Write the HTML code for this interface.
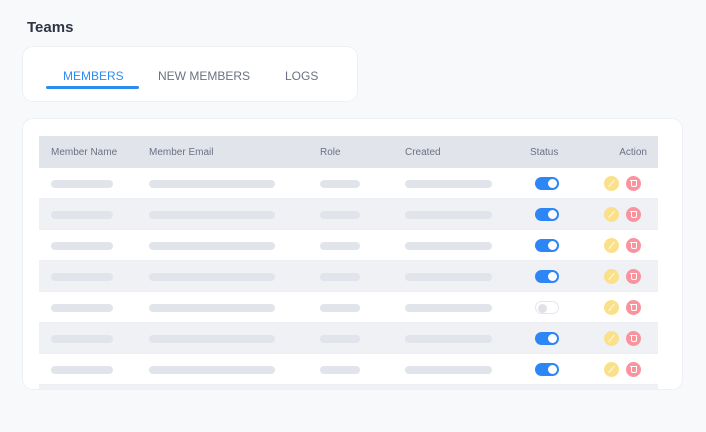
<!DOCTYPE html>
<html><head><style>
body{margin:0;width:706px;height:432px;background:#f8f9fb;font-family:"Liberation Sans",sans-serif;position:relative;overflow:hidden}
.t{position:absolute;left:27px;top:19px;font-size:15px;font-weight:bold;color:#2f3545}
.tabs{position:absolute;left:22px;top:46px;width:336px;height:56px;background:#fff;border:1px solid #eef0f4;border-radius:11px;box-sizing:border-box}
.tab{position:absolute;top:22px;font-size:12px;color:#6b7183}
.ul{position:absolute;left:23px;top:39px;width:93px;height:3px;background:#2d8cf0;border-radius:2px}
.card{position:absolute;left:22px;top:118px;width:661px;height:272px;background:#fff;border:1px solid #eef0f4;border-radius:11px;box-sizing:border-box;overflow:hidden}
.tbl{position:absolute;left:16px;top:17px;width:619px}
.hd{height:32px;background:#e2e4ec;position:relative;font-size:10px;color:#6b7183}
.hd span{position:absolute;top:11px}
.r{height:31px;position:relative;border-bottom:1px solid #eceef3;box-sizing:border-box}
.b{position:absolute;top:12px;height:8px;background:#e2e4ec;border-radius:4px}
.tg{position:absolute;left:496px;top:9px;width:24px;height:13px;border-radius:7px;background:#2d86f6}
.tg::after{content:"";position:absolute;right:2px;top:2px;width:9px;height:9px;border-radius:50%;background:#fff}
.tg.off{background:#fff;border:1px solid #e4e6ec;box-sizing:border-box}
.tg.off::after{left:2px;right:auto;top:1.5px;background:#e0e2e8}
.y,.p{position:absolute;top:8px;width:15px;height:15px;border-radius:50%}
.y{left:565px;background:#fbe08a}.p{left:587px;background:#f9949f}
.y::after{content:"";position:absolute;left:7px;top:3px;width:1.2px;height:9px;background:#fff;transform:rotate(40deg);opacity:.8}
.p::before{content:"";position:absolute;left:4px;top:4px;width:7px;height:1px;background:#fff}
.p::after{content:"";position:absolute;left:4.5px;top:5px;width:4px;height:5px;border:1px solid #fff;border-top:0;border-radius:0 0 2px 2px}
</style></head><body>
<div class="t">Teams</div>
<div class="tabs">
<div class="tab" style="left:40px;color:#2d8cf0">MEMBERS</div>
<div class="tab" style="left:135px">NEW MEMBERS</div>
<div class="tab" style="left:262px">LOGS</div>
<div class="ul"></div>
</div>
<div class="card"><div class="tbl">
<div class="hd"><span style="left:12px">Member Name</span><span style="left:110px">Member Email</span><span style="left:281px">Role</span><span style="left:366px">Created</span><span style="left:491px">Status</span><span style="right:11px">Action</span></div>
<div>
<div class="r" style="background:#fff"><div class="b" style="left:12px;width:62px"></div><div class="b" style="left:110px;width:126px"></div><div class="b" style="left:281px;width:40px"></div><div class="b" style="left:366px;width:87px"></div><div class="tg"></div><div class="y"></div><div class="p"></div></div>
<div class="r" style="background:#f0f1f5"><div class="b" style="left:12px;width:62px"></div><div class="b" style="left:110px;width:126px"></div><div class="b" style="left:281px;width:40px"></div><div class="b" style="left:366px;width:87px"></div><div class="tg"></div><div class="y"></div><div class="p"></div></div>
<div class="r" style="background:#fff"><div class="b" style="left:12px;width:62px"></div><div class="b" style="left:110px;width:126px"></div><div class="b" style="left:281px;width:40px"></div><div class="b" style="left:366px;width:87px"></div><div class="tg"></div><div class="y"></div><div class="p"></div></div>
<div class="r" style="background:#f0f1f5"><div class="b" style="left:12px;width:62px"></div><div class="b" style="left:110px;width:126px"></div><div class="b" style="left:281px;width:40px"></div><div class="b" style="left:366px;width:87px"></div><div class="tg"></div><div class="y"></div><div class="p"></div></div>
<div class="r" style="background:#fff"><div class="b" style="left:12px;width:62px"></div><div class="b" style="left:110px;width:126px"></div><div class="b" style="left:281px;width:40px"></div><div class="b" style="left:366px;width:87px"></div><div class="tg off"></div><div class="y"></div><div class="p"></div></div>
<div class="r" style="background:#f0f1f5"><div class="b" style="left:12px;width:62px"></div><div class="b" style="left:110px;width:126px"></div><div class="b" style="left:281px;width:40px"></div><div class="b" style="left:366px;width:87px"></div><div class="tg"></div><div class="y"></div><div class="p"></div></div>
<div class="r" style="background:#fff"><div class="b" style="left:12px;width:62px"></div><div class="b" style="left:110px;width:126px"></div><div class="b" style="left:281px;width:40px"></div><div class="b" style="left:366px;width:87px"></div><div class="tg"></div><div class="y"></div><div class="p"></div></div>
<div class="r" style="background:#f0f1f5"></div>
</div></div></div>
</body></html>
